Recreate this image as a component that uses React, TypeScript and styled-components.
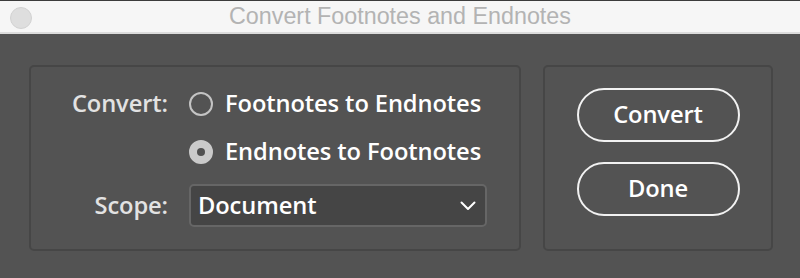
import React from "react";
import styled, { createGlobalStyle } from "styled-components";

const Global = createGlobalStyle`
  html, body { margin: 0; padding: 0; background: #535353; }
  body { width: 800px; height: 278px; overflow: hidden; }
  * { box-sizing: border-box; }
`;

const Window = styled.div`
  width: 800px;
  height: 278px;
  display: flex;
  flex-direction: column;
  background: #535353;
  font-family: "Open Sans", "Liberation Sans", sans-serif;
`;

const TitleBar = styled.div`
  height: 34px;
  flex: none;
  display: flex;
  align-items: center;
  justify-content: center;
  position: relative;
  background: #f6f6f6;
  border-top: 1px solid #3c3c3c;
  border-bottom: 2px solid #dcdcdc;
`;

const CloseDot = styled.span`
  position: absolute;
  left: 10px;
  top: 6px;
  width: 22px;
  height: 22px;
  border-radius: 50%;
  background: #dedede;
  border: 1px solid #d2d2d2;
`;

const Title = styled.div`
  font-family: "Liberation Sans", Arial, sans-serif;
  font-size: 23.3px;
  color: #b3b3b3;
  line-height: 1;
  margin-top: 1px;
`;

const Body = styled.div`
  flex: 1;
  display: flex;
  gap: 22px;
  padding: 31px 27px 27px 29px;
`;

const Panel = styled.div<{ $width: number }>`
  width: ${(p) => p.$width}px;
  border: 2px solid #464646;
  border-radius: 5px;
  display: flex;
  flex-direction: column;
`;

const OptionsGrid = styled.div`
  display: grid;
  grid-template-columns: 137px 1fr;
  grid-template-rows: 48px 48px 51px;
  column-gap: 21px;
  padding-top: 13px;
  align-items: center;
`;

const Label = styled.div<{ $bottom?: boolean }>`
  text-align: right;
  font-size: 23.7px;
  font-weight: 600;
  letter-spacing: -0.1px;
  color: #e2e2e2;
  line-height: 1;
  align-self: ${(p) => (p.$bottom ? "end" : "center")};
  padding-bottom: ${(p) => (p.$bottom ? "9px" : "0")};
`;

const RadioRow = styled.label`
  display: flex;
  align-items: center;
  gap: 12px;
  font-size: 23.7px;
  font-weight: 600;
  letter-spacing: -0.1px;
  color: #ffffff;
  line-height: 1;
`;

const RadioCircle = styled.span<{ $checked?: boolean }>`
  width: 24px;
  height: 24px;
  border-radius: 50%;
  flex: none;
  display: flex;
  align-items: center;
  justify-content: center;
  border: 2px solid ${(p) => (p.$checked ? "#cacaca" : "#c4c4c4")};
  background: ${(p) => (p.$checked ? "#cacaca" : "transparent")};
  &::after {
    content: "";
    display: ${(p) => (p.$checked ? "block" : "none")};
    width: 8px;
    height: 8px;
    border-radius: 50%;
    background: #505050;
  }
`;

const Select = styled.div`
  align-self: end;
  width: 298px;
  height: 43px;
  border: 2px solid #666666;
  border-radius: 5px;
  background: #454545;
  display: flex;
  align-items: center;
  justify-content: space-between;
  padding: 0 9px 0 7px;
  font-size: 23.7px;
  font-weight: 600;
  letter-spacing: -0.1px;
  color: #ffffff;
  line-height: 1;
`;

const ButtonStack = styled.div`
  display: flex;
  flex-direction: column;
  align-items: center;
  gap: 20px;
  padding-top: 21px;
`;

const PillButton = styled.button`
  width: 163px;
  height: 54px;
  border-radius: 27px;
  border: 2px solid #f2f2f2;
  background: transparent;
  color: #ffffff;
  font-family: "Open Sans", "Liberation Sans", sans-serif;
  font-size: 23.7px;
  font-weight: 600;
  letter-spacing: -0.1px;
  line-height: 1;
  padding: 0;
  display: flex;
  align-items: center;
  justify-content: center;
`;

const Chevron = () => (
  <svg width="16" height="10" viewBox="0 0 16 10" fill="none">
    <path d="M1.5 1.5 L8 8 L14.5 1.5" stroke="#ffffff" strokeWidth="2" strokeLinecap="round" strokeLinejoin="round" />
  </svg>
);

export default function App() {
  return (
    <>
      <Global />
      <Window>
        <TitleBar>
          <CloseDot />
          <Title>Convert Footnotes and Endnotes</Title>
        </TitleBar>
        <Body>
          <Panel $width={492}>
            <OptionsGrid>
              <Label>Convert:</Label>
              <RadioRow>
                <RadioCircle />
                Footnotes to Endnotes
              </RadioRow>
              <span />
              <RadioRow>
                <RadioCircle $checked />
                Endnotes to Footnotes
              </RadioRow>
              <Label $bottom>Scope:</Label>
              <Select>
                <span>Document</span>
                <Chevron />
              </Select>
            </OptionsGrid>
          </Panel>
          <Panel $width={230}>
            <ButtonStack>
              <PillButton>Convert</PillButton>
              <PillButton>Done</PillButton>
            </ButtonStack>
          </Panel>
        </Body>
      </Window>
    </>
  );
}
